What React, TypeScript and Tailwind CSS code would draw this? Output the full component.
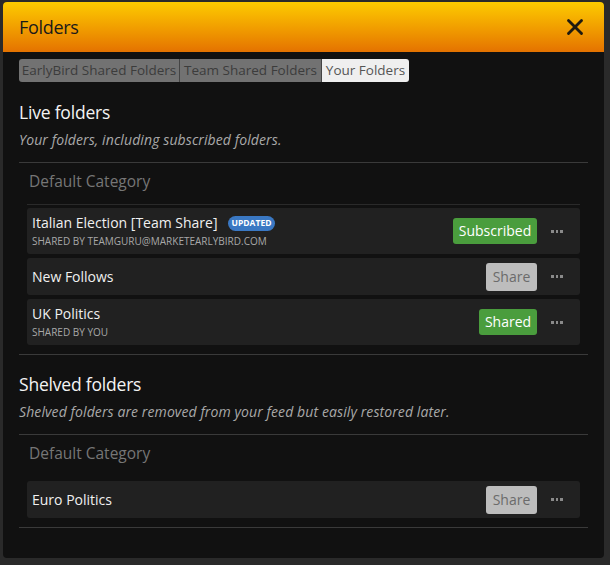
import { X } from "lucide-react"

interface Folder {
  name: string
  sharedBy?: string
  updated?: boolean
  action: "subscribed" | "share" | "shared"
}

const liveFolders: Folder[] = [
  {
    name: "Italian Election [Team Share]",
    sharedBy: "Shared by teamguru@marketearlybird.com",
    updated: true,
    action: "subscribed",
  },
  { name: "New Follows", action: "share" },
  { name: "UK Politics", sharedBy: "Shared by you", action: "shared" },
]

const shelvedFolders: Folder[] = [{ name: "Euro Politics", action: "share" }]

function ActionButton({ action }: { action: Folder["action"] }) {
  if (action === "share") {
    return (
      <button className="h-[28px] w-[51px] rounded-[3px] bg-[#bdbdbd] text-[#6b6b6b] text-[14px] leading-none">
        Share
      </button>
    )
  }
  return (
    <button
      className={`h-[26px] rounded-[3px] bg-[#4a9d3d] text-white text-[14px] leading-none ${
        action === "subscribed" ? "w-[84px]" : "w-[58px]"
      }`}
    >
      {action === "subscribed" ? "Subscribed" : "Shared"}
    </button>
  )
}

function Dots() {
  return (
    <div className="flex gap-[2px] w-[12px]">
      <span className="w-[3px] h-[3px] bg-[#8a8a8a]" />
      <span className="w-[3px] h-[3px] bg-[#8a8a8a]" />
      <span className="w-[3px] h-[3px] bg-[#8a8a8a]" />
    </div>
  )
}

function FolderRow({ folder }: { folder: Folder }) {
  const tall = !!folder.sharedBy
  return (
    <div
      className={`flex items-center justify-between bg-[#212121] rounded-[3px] pl-[5px] pr-[17px] ${
        tall ? "h-[46px]" : "h-[37px]"
      }`}
    >
      <div className="flex flex-col">
        <div className="flex items-center gap-[10px]">
          <span className="text-[14px] text-[#f0f0f0] leading-[18px] font-medium">{folder.name}</span>
          {folder.updated && (
            <span className="bg-[#3a78c3] text-white text-[8.5px] font-bold rounded-full px-[4px] h-[15px] flex items-center leading-none">
              UPDATED
            </span>
          )}
        </div>
        {folder.sharedBy && (
          <span className="uppercase text-[10px] text-[#a8a8a8] leading-[14px] mt-[2px]">
            {folder.sharedBy}
          </span>
        )}
      </div>
      <div className="flex items-center gap-[14px]">
        <ActionButton action={folder.action} />
        <Dots />
      </div>
    </div>
  )
}

function Section({
  title,
  subtitle,
  folders,
  headerLine,
}: {
  title: string
  subtitle: string
  folders: Folder[]
  headerLine?: boolean
}) {
  return (
    <div>
      <h2 className="text-[17.5px] text-[#f4f4f4] font-medium leading-[22px] tracking-[-0.2px]">{title}</h2>
      <p className="italic text-[14px] text-[#a9a9a9] mt-[8px] leading-[18px] tracking-[0.1px]">{subtitle}</p>
      <div className="mt-[13px] border-t border-[#3a3a3a] border-b pb-[9px]">
        <div className="px-[8px]">
          <div
            className={`pl-[2px] flex items-center text-[15.5px] text-[#767676] ${
              headerLine ? "h-[42px] pb-[4px] border-b border-[#2a2a2a]" : "h-[39px] pb-[2px]"
            }`}
          >
            Default Category
          </div>
          <div className={`flex flex-col gap-[4px] ${headerLine ? "mt-[3px]" : "mt-[7px]"}`}>
            {folders.map((f) => (
              <FolderRow key={f.name} folder={f} />
            ))}
          </div>
        </div>
      </div>
    </div>
  )
}

export default function App() {
  return (
    <div
      className="w-[610px] h-[565px] bg-[#2a2a2a] pt-[2px] pl-[3px] overflow-hidden"
      style={{ fontFamily: "'Open Sans', 'Noto Sans', sans-serif" }}
    >
      <div className="w-[601px] h-[556px] bg-[#111111] rounded-[4px] overflow-hidden">
        <div className="h-[50px] bg-gradient-to-b from-[#fccb00] to-[#e47200] flex items-center justify-between pl-[16px] pr-[16px]">
          <span className="text-[18px] text-[#1a1a1a] tracking-[-0.3px]">Folders</span>
          <X size={26} strokeWidth={2.6} className="text-[#1e1a10]" />
        </div>
        <div className="px-[16px] pt-[7px]">
          <div className="flex h-[23px] text-[13.5px] leading-none">
            <div className="w-[161px] flex items-center justify-center bg-[#727272] text-[#3c3c3c] rounded-l-[3px] border-r border-[#444]">
              EarlyBird Shared Folders
            </div>
            <div className="w-[142px] flex items-center justify-center bg-[#727272] text-[#3c3c3c] border-r border-[#444]">
              Team Shared Folders
            </div>
            <div className="w-[87px] flex items-center justify-center bg-[#efefef] text-[#555] rounded-r-[3px]">
              Your Folders
            </div>
          </div>
          <div className="mt-[19px]">
            <Section
              title="Live folders"
              subtitle="Your folders, including subscribed folders."
              folders={liveFolders}
              headerLine
            />
          </div>
          <div className="mt-[18px]">
            <Section
              title="Shelved folders"
              subtitle="Shelved folders are removed from your feed but easily restored later."
              folders={shelvedFolders}
            />
          </div>
        </div>
      </div>
    </div>
  )
}
